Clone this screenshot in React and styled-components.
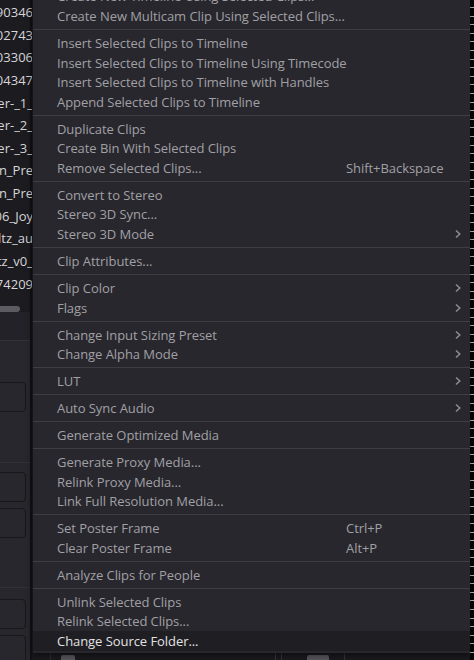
import React from "react";
import styled, { createGlobalStyle } from "styled-components";

const GlobalStyle = createGlobalStyle`
  html, body {
    margin: 0;
    padding: 0;
    background: #1b1a1f;
  }
  body {
    font-family: "Open Sans", "Liberation Sans", sans-serif;
  }
`;

const clips = [
  "A001_C0090346",
  "A001_C0002743",
  "A001_C0003306",
  "A001_C0004347",
  "Trailer-_1_",
  "Trailer-_2_",
  "Trailer-_3_",
  "Kitchen_Pre",
  "Kitchen_Pre",
  "Sc_06_Joy",
  "Waltz_au",
  "Waltz_v0_",
  "IMG_74209",
];

const groups = [
  [
    { label: "Create New Timeline Using Selected Clips..." },
    { label: "Create New Multicam Clip Using Selected Clips..." },
  ],
  [
    { label: "Insert Selected Clips to Timeline" },
    { label: "Insert Selected Clips to Timeline Using Timecode" },
    { label: "Insert Selected Clips to Timeline with Handles" },
    { label: "Append Selected Clips to Timeline" },
  ],
  [
    { label: "Duplicate Clips" },
    { label: "Create Bin With Selected Clips" },
    { label: "Remove Selected Clips...", shortcut: "Shift+Backspace" },
  ],
  [
    { label: "Convert to Stereo" },
    { label: "Stereo 3D Sync..." },
    { label: "Stereo 3D Mode", sub: true },
  ],
  [{ label: "Clip Attributes..." }],
  [
    { label: "Clip Color", sub: true },
    { label: "Flags", sub: true },
  ],
  [
    { label: "Change Input Sizing Preset", sub: true },
    { label: "Change Alpha Mode", sub: true },
  ],
  [{ label: "LUT", sub: true }],
  [{ label: "Auto Sync Audio", sub: true }],
  [{ label: "Generate Optimized Media" }],
  [
    { label: "Generate Proxy Media..." },
    { label: "Relink Proxy Media..." },
    { label: "Link Full Resolution Media..." },
  ],
  [
    { label: "Set Poster Frame", shortcut: "Ctrl+P" },
    { label: "Clear Poster Frame", shortcut: "Alt+P" },
  ],
  [{ label: "Analyze Clips for People" }],
  [
    { label: "Unlink Selected Clips" },
    { label: "Relink Selected Clips..." },
    { label: "Change Source Folder...", active: true },
  ],
];

const Chevron = () => (
  <svg width="6" height="10" viewBox="0 0 6 10">
    <polyline
      points="1,1.5 4.8,5 1,8.5"
      fill="none"
      stroke="#8d8d92"
      strokeWidth="1.5"
    />
  </svg>
);

export default function App() {
  return (
    <>
      <GlobalStyle />
      <Screen>
        <MediaPool>
          <ClipList>
            {clips.map((name, i) => (
              <ClipRow key={i}>
                <span>{name}</span>
              </ClipRow>
            ))}
            <ScrollThumb />
          </ClipList>
          <InspectorHeader />
          <Inspector>
            <Field $top={41} />
            <Divider $top={50} />
            <Field $top={9} />
            <Field $top={6} />
            <Divider $top={49} />
            <Field $top={11} />
            <Field $top={6} />
          </Inspector>
        </MediaPool>

        <Workspace>
          <BottomBar>
            <BarBlock $width={18} />
            <BarThumb $left={10} />
            <BarLine $left={200} />
            <BarLine $left={5} />
            <BarThumb $left={25} $width={22} />
            <BarLine $left={15} />
          </BottomBar>
        </Workspace>

        <Ruler />

        <Menu>
          {groups.map((group, gi) => (
            <React.Fragment key={gi}>
              {gi > 0 && <Separator />}
              {group.map((item) => (
                <Item key={item.label} $active={item.active}>
                  <Label>{item.label}</Label>
                  <Shortcut>{item.shortcut}</Shortcut>
                  <Arrow>{item.sub && <Chevron />}</Arrow>
                </Item>
              ))}
            </React.Fragment>
          ))}
        </Menu>
      </Screen>
    </>
  );
}

const Screen = styled.div`
  position: relative;
  display: flex;
  width: 474px;
  height: 660px;
  overflow: hidden;
  background: #1b1a1f;
`;

const MediaPool = styled.div`
  display: flex;
  flex-direction: column;
  width: 30px;
  flex: none;
  border-right: 2px solid #121115;
`;

const ClipList = styled.div`
  display: flex;
  flex-direction: column;
  height: 312px;
  padding-top: 1px;
  box-sizing: border-box;
  background: #1c1b20;
`;

const ClipRow = styled.div`
  display: flex;
  justify-content: flex-end;
  height: 23px;
  overflow: hidden;
  margin-right: -3px;
  font-size: 13px;
  line-height: 23px;
  color: #d6d6d8;
  white-space: nowrap;
`;

const ScrollThumb = styled.div`
  width: 22px;
  height: 6px;
  margin: 11px 0 0 -2px;
  border-radius: 3px;
  background: #5c5b61;
`;

const InspectorHeader = styled.div`
  height: 28px;
  flex: none;
  background: #232228;
  border-bottom: 1px solid #34333a;
`;

const Inspector = styled.div`
  flex: 1;
  display: flex;
  flex-direction: column;
  background: #28272d;
  overflow: hidden;
`;

const Field = styled.div`
  flex: none;
  width: 34px;
  height: 28px;
  margin: ${(p) => p.$top}px 0 0 -10px;
  border: 1px solid #17161a;
  border-radius: 4px;
`;

const Divider = styled.div`
  flex: none;
  height: 1px;
  margin-top: ${(p) => p.$top}px;
  background: #323137;
`;

const Workspace = styled.div`
  flex: 1;
  display: flex;
  flex-direction: column;
  justify-content: flex-end;
  background: #1e1d22;
`;

const BottomBar = styled.div`
  display: flex;
  align-items: flex-end;
  height: 8px;
  background: #1a191d;
`;

const BarBlock = styled.div`
  width: ${(p) => p.$width}px;
  height: 8px;
  border-right: 1px solid #2c2b30;
`;

const BarThumb = styled.div`
  width: ${(p) => p.$width || 14}px;
  height: 5px;
  margin-left: ${(p) => p.$left}px;
  background: #55545a;
  border-radius: 2px 2px 0 0;
`;

const BarLine = styled.div`
  width: 1px;
  height: 8px;
  margin-left: ${(p) => p.$left}px;
  background: #34333a;
`;

const Ruler = styled.div`
  width: 4px;
  flex: none;
  background-color: #060606;
  background-image: repeating-linear-gradient(
    to bottom,
    transparent 0px,
    transparent 7px,
    #b8b8b8 7px,
    #b8b8b8 8px,
    transparent 8px,
    transparent 8.6px
  );
`;

const Menu = styled.div`
  position: absolute;
  top: -17.4px;
  left: 32px;
  right: 4px;
  padding: 4px 0 2.5px;
  background: #28272d;
  border-left: 1px solid #151418;
  box-shadow: 0 2px 6px rgba(0, 0, 0, 0.5);
`;

const Separator = styled.div`
  height: 1px;
  margin: 3.2px 0;
  background: #3e3d44;
`;

const Item = styled.div`
  display: grid;
  grid-template-columns: 289px 1fr 15px;
  align-items: center;
  height: 19.6px;
  padding-left: 24px;
  font-size: 13px;
  letter-spacing: -0.06px;
  color: ${(p) => (p.$active ? "#e2e2e4" : "#a0a0a5")};
  background: ${(p) => (p.$active ? "#1f1e22" : "transparent")};
  white-space: nowrap;
`;

const Label = styled.span``;

const Shortcut = styled.span`
  color: #a0a0a5;
`;

const Arrow = styled.span`
  display: flex;
  align-items: center;
  height: 100%;
`;
